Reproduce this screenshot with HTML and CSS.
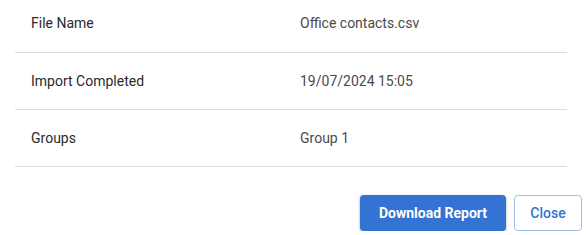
FILE: index.html
```html
<!DOCTYPE html>
<html>
<head>
<meta charset="utf-8">
<link rel="stylesheet" href="styles.css">
</head>
<body>
<div class="panel">
  <div class="details">
    <div class="row first"><div class="label">File Name</div><div class="value">Office contacts.csv</div></div>
    <div class="row"><div class="label">Import Completed</div><div class="value">19/07/2024 15:05</div></div>
    <div class="row"><div class="label">Groups</div><div class="value">Group 1</div></div>
  </div>
  <div class="actions">
    <button class="btn primary">Download Report</button>
    <button class="btn outline">Close</button>
  </div>
</div>
</body>
</html>
```
FILE: styles.css
```css
html, body { margin: 0; padding: 0; background: #fff; }
body { font-family: Roboto, "Noto Sans", sans-serif; font-size: 14px; color: #333; }
.panel { padding: 0 4px 0 15px; }
.details { width: 552px; }
.row {
  display: grid;
  grid-template-columns: 269px 1fr;
  height: 56px;
  align-items: center;
  border-bottom: 1px solid #dedede;
}
.row.first { height: 45px; padding-bottom: 7px; }
.label { padding-left: 16px; font-weight: 400; color: #2a2a2a; }
.value { padding-left: 16px; color: #4a4a4a; }
.actions {
  display: flex;
  justify-content: flex-end;
  gap: 8px;
  margin-top: 28px;
}
.btn {
  font-family: Roboto, "Noto Sans", sans-serif;
  font-size: 14px;
  height: 36px;
  border-radius: 4px;
  cursor: pointer;
  font-weight: 700;
}
.primary {
  width: 146px;
  background: #3273d3;
  color: #fff;
  border: none;
  box-shadow: 0 1px 3px rgba(0,0,0,0.35);
}
.outline {
  width: 68px;
  background: #fff;
  color: #3273d3;
  border: 1px solid #9dbdea;
  font-weight: 500;
}
```
